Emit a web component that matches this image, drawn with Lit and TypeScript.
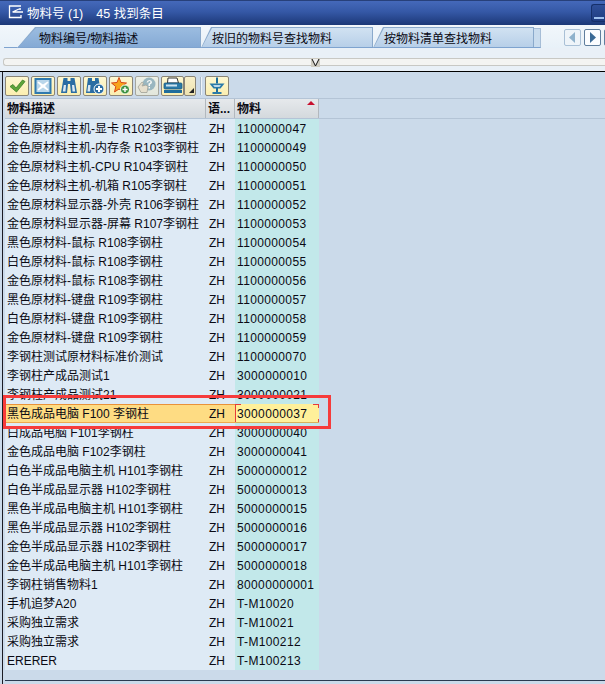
import { LitElement, html, css, svg } from "lit";
import { customElement } from "lit/decorators.js";

const rows: [string, string][] = [
  ["金色原材料主机-显卡 R102李钢柱", "1100000047"],
  ["金色原材料主机-内存条 R103李钢柱", "1100000049"],
  ["金色原材料主机-CPU R104李钢柱", "1100000050"],
  ["金色原材料主机-机箱 R105李钢柱", "1100000051"],
  ["金色原材料显示器-外壳 R106李钢柱", "1100000052"],
  ["金色原材料显示器-屏幕 R107李钢柱", "1100000053"],
  ["黑色原材料-鼠标 R108李钢柱", "1100000054"],
  ["白色原材料-鼠标 R108李钢柱", "1100000055"],
  ["金色原材料-鼠标 R108李钢柱", "1100000056"],
  ["黑色原材料-键盘 R109李钢柱", "1100000057"],
  ["白色原材料-键盘 R109李钢柱", "1100000058"],
  ["金色原材料-键盘 R109李钢柱", "1100000059"],
  ["李钢柱测试原材料标准价测试", "1100000070"],
  ["李钢柱产成品测试1", "3000000010"],
  ["李钢柱产成品测试21", "3000000021"],
  ["黑色成品电脑 F100 李钢柱", "3000000037"],
  ["白成品电脑 F101李钢柱", "3000000040"],
  ["金色成品电脑 F102李钢柱", "3000000041"],
  ["白色半成品电脑主机 H101李钢柱", "5000000012"],
  ["白色半成品显示器 H102李钢柱", "5000000013"],
  ["黑色半成品电脑主机 H101李钢柱", "5000000015"],
  ["黑色半成品显示器 H102李钢柱", "5000000016"],
  ["金色半成品显示器 H102李钢柱", "5000000017"],
  ["金色半成品电脑主机 H101李钢柱", "5000000018"],
  ["李钢柱销售物料1", "80000000001"],
  ["手机追梦A20", "T-M10020"],
  ["采购独立需求", "T-M10021"],
  ["采购独立需求", "T-M100212"],
  ["ERERER", "T-M100213"],
];

const ico = (body: unknown) =>
  html`<svg width="20" height="18" viewBox="0 0 20 18">${body}</svg>`;

const check = svg`<path d="M3 9.5 L6 7.5 L9 11 L15.5 3 L18 4.5 L9.5 15 Z" fill="#5da53a" stroke="#3e7f2b" stroke-width=".8"/>`;
const cancel = svg`<rect x="1.5" y="1" width="17" height="16" fill="#2f79ae"/><rect x="3.5" y="3" width="13" height="12" fill="#b9d6ea"/><path d="M5.5 4.5 L10 7.5 L14.5 4.5 L15.5 5.5 L12 9 L15.5 12.5 L14.5 13.5 L10 10.5 L5.5 13.5 L4.5 12.5 L8 9 L4.5 5.5 Z" fill="#fff"/>`;
const bino = svg`<path d="M4.5 1 H8.5 V4 H11.5 V1 H15.5 L18 16 H12 L11 7 H9 L8 16 H2 Z" fill="#2a6da3"/><path d="M4.8 8 H7 L6.5 14.5 H3.8 Z M13 8 H15.2 L16.2 14.5 H13.5 Z" fill="#dce9f3"/>`;
const binoPlus = svg`<path d="M3 1 H7 V4 H10 V1 H13.5 L14.5 7 L10 9 V16 H1 Z" fill="#2a6da3"/><path d="M3.2 8 H5.5 L5 14.5 H2.4 Z" fill="#dce9f3"/><circle cx="14" cy="12" r="5" fill="#2a6da3" stroke="#f5f9fb" stroke-width="1"/><path d="M11 11 h2 v-2 h2 v2 h2 v2 h-2 v2 h-2 v-2 h-2 z" fill="#fff"/>`;
const starPlus = svg`<path d="M8 0.5 L10 5.5 L15.5 6 L11.2 9.5 L12.5 15 L8 12 L3.5 15 L4.8 9.5 L0.5 6 L6 5.5 Z" fill="#f7a51c" stroke="#d6461b" stroke-width="1"/><circle cx="14" cy="12.5" r="4.5" fill="#3c9140" stroke="#fdfdf0" stroke-width="1"/><path d="M11.5 11.8 h1.8 v-1.8 h1.4 v1.8 h1.8 v1.4 h-1.8 v1.8 h-1.4 v-1.8 h-1.8 z" fill="#fff"/>`;
const help = svg`<g opacity=".75"><circle cx="12" cy="7" r="6.5" fill="#7fa5b5"/><path d="M9.5 5.5 q0.5-2.5 3-2.5 q2.5.2 2.5 2.2 q0 1.5-2 2.3 v1.5 h-1.5 v-2.5 q2-.5 2-1.5 q-.2-1-1-1 q-1 0-1.3 1.2 z M11.5 10 h1.5 v1.5 h-1.5 z" fill="#fff"/><path d="M1 10 l4-5 l1.5 1 l-1.5 3 l4 -1 l2 1.5 l-1 6 h-6 z" fill="#e6dcc8" stroke="#8a8a80" stroke-width=".8"/></g>`;
const printer = svg`<path d="M5 1 h9 l1.5 5 h-11 z" fill="#fff" stroke="#333" stroke-width="1"/><rect x="1" y="6" width="18" height="6" rx="1" fill="#2a7aa8" stroke="#1d5a80" stroke-width=".8"/><rect x="3" y="7.5" width="11" height="2" fill="#cde3f0"/><rect x="1" y="13" width="18" height="3" fill="#1f6d9c"/>`;
const pin = svg`<path d="M9 0.5 h2 v6 h-2 z" fill="#1f6d9c"/><path d="M2.5 6.5 h15 l-4 5 h-7 z" fill="#2a7aa8"/><path d="M6 8 h8 l-1.5 2 h-5 z" fill="#bcd9ea"/><path d="M9 11 h2 v4 h-2 z" fill="#1f6d9c"/><path d="M5.5 15 h9 v2 h-9 z" fill="#2a7aa8"/>`;

@customElement("app-root")
export class AppRoot extends LitElement {
  static styles = css`
    :host {
      display: block;
      width: 605px;
      height: 684px;
      overflow: hidden;
      position: relative;
      font: 12px "Liberation Sans", "Noto Sans CJK SC", sans-serif;
      color: #0a0a14;
      background: #cbdaea;
    }
    .title {
      height: 25px;
      box-sizing: border-box;
      border-top: 1px solid #27407a;
      background: linear-gradient(#4569ba, #3558a6 45%, #1c3877);
      color: #fff;
      display: flex;
      align-items: center;
      padding: 0 0 2px 8px;
      font-size: 12.5px;
    }
    .title svg { margin-right: 3px; flex: none; }
    .title .t2 { margin-left: 13px; }
    .title .fill { flex: 1; }
    .min {
      flex: none;
      width: 14px;
      height: 14px;
      margin-right: -1px;
      border: 1px solid #16306a;
      border-right: none;
      border-radius: 3px 0 0 3px;
      background: linear-gradient(#2f4f99, #1f3c80);
      display: flex;
      align-items: flex-end;
      justify-content: center;
      padding-bottom: 2px;
      margin-top: 2px;
    }
    .min i { display: block; width: 10px; height: 2px; background: #9fc0ee; }
    .tabbar {
      height: 23px;
      box-sizing: border-box;
      background: linear-gradient(#f2f7fb, #e8f1f8);
      display: flex;
      align-items: flex-end;
      padding-left: 4px;
      position: relative;
    }
    .tabline {
      flex: none;
      width: 13px;
      height: 1px;
      background: #7ea3cf;
    }
    .tab {
      flex: none;
      height: 21px;
      padding: 1px 0 0 22px;
      box-sizing: border-box;
      display: flex;
      align-items: center;
      clip-path: polygon(18px 0, 100% 0, 100% 100%, 0 100%);
      background: #8aa9cb;
      position: relative;
      white-space: nowrap;
      border-bottom: 1px solid #7ea3cf;
    }
    .tab::before {
      content: "";
      position: absolute;
      inset: 1px 1px 0 1px;
      clip-path: polygon(18px 0, 100% 0, 100% 100%, 0 100%);
      background: linear-gradient(#d1e2f2, #b7cfe8);
    }
    .tab span { position: relative; }
    .tab.on::before { background: linear-gradient(#9bbce0, #85aad5); }
    .tab.on { width: 184px; }
    .tab.t2 { width: 172px; padding-left: 11px; clip-path: polygon(10px 0, 100% 0, 100% 100%, 0 100%); }
    .tab.t2::before { clip-path: polygon(10px 0, 100% 0, 100% 100%, 0 100%); }
    .tab.t3 { width: 161px; padding-left: 11px; clip-path: polygon(10px 0, 100% 0, 100% 100%, 0 100%); }
    .tab.t3::before { clip-path: polygon(10px 0, 100% 0, 100% 100%, 0 100%); }
    .stack {
      flex: none;
      width: 7px;
      height: 20px;
      box-sizing: border-box;
      border: 1px solid #a6bdd6;
      border-left: none;
      border-bottom: 1px solid #7ea3cf;
      background: #c9dcee;
    }
    .nav {
      display: flex;
      gap: 3px;
      margin-left: 23px;
      align-self: flex-start;
      margin-top: 4px;
    }
    .nav b {
      flex: none;
      width: 17px;
      height: 17px;
      box-sizing: border-box;
      border: 1px solid #a9c0d6;
      border-radius: 2px;
      background: #eef4f9;
      display: flex;
      align-items: center;
      justify-content: center;
    }
    .nav b.act { border-color: #5f7e9d; background: #fbfdff; }
    .split {
      height: 24px;
      box-sizing: border-box;
      background: #e9f0f7;
      padding: 10px 0 0 3px;
      border-bottom: 1px solid #000;
      position: relative;
    }
    .split div {
      height: 8px;
      box-sizing: border-box;
      border-top: 1px solid #c8c8c4;
      border-bottom: 1px solid #c8c8c4;
      border-left: 1px solid #c8c8c4;
      border-radius: 3px 0 0 3px;
      background: #f4f4f2;
    }
    .grip {
      position: absolute;
      left: 311px;
      top: 10px;
      width: 9px;
      height: 9px;
      background: #cfccc2;
    }
    .grip svg { display: block; }
    .body {
      margin-left: 2px;
      padding-left: 2px;
      height: 612px;
      box-sizing: border-box;
      border-left: 1px solid #1b1b24;
      position: relative;
    }
    .frame {
      height: 609px;
      box-sizing: border-box;
      border-bottom: 1px solid #2a3a50;
    }
    .toolbar {
      height: 27px;
      box-sizing: border-box;
      display: flex;
      align-items: flex-start;
      padding-top: 4px;
      border-bottom: 1px solid #b4c4d6;
    }
    .btn {
      width: 24px;
      height: 20px;
      box-sizing: border-box;
      flex: none;
      border: 1px solid #8a8578;
      border-radius: 2px;
      background: linear-gradient(#fdf7d2, #fbeeb0);
      margin-right: 2px;
      display: flex;
      align-items: center;
      justify-content: center;
    }
    .btn.fade { background: linear-gradient(#eef0e6, #e2e6dc); border-color: #a5a69e; }
    .btn.print { width: 23px; margin-right: 0; }
    .btn.drop { width: 12px; margin-right: 0; background: linear-gradient(#f7efca, #eee3b0); position: relative; }
    .btn.drop::after {
      content: "";
      position: absolute;
      right: 1px;
      bottom: 2px;
      border-left: 5px solid transparent;
      border-bottom: 5px solid #222;
    }
    .sep { width: 2px; height: 18px; background: #eef3f8; border-left: 1px solid #a8b8c8; box-sizing: border-box; margin: 1px 3px 0 4px; }
    .header {
      display: grid;
      grid-template-columns: 201px 29px 84px;
      height: 20px;
      box-sizing: border-box;
      border-bottom: 1px solid #b4c4d6;
      width: 601px;
      font-weight: 700;
    }
    .header > div {
      background: linear-gradient(#e6e9ec, #d4d9dd);
      border-right: 1px solid #b2b8be;
      padding-left: 2px;
      line-height: 21px;
      overflow: hidden;
      white-space: nowrap;
      position: relative;
      box-sizing: border-box;
    }
    .header .sort {
      position: absolute;
      right: 3px;
      top: 2px;
      border-left: 4px solid transparent;
      border-right: 4px solid transparent;
      border-bottom: 4px solid #c8102e;
    }
    .tbl { width: 314px; }
    .row {
      display: grid;
      grid-template-columns: 201px 29px 84px;
      height: 19px;
      line-height: 21px;
      background: #deeaf5;
      white-space: nowrap;
    }
    .row > div { padding-left: 2px; overflow: hidden; height: 19px; }
    .row > div:nth-child(2) { padding-left: 3px; }
    .row > div:nth-child(3) { background: #c2e8ea; letter-spacing: 0.03em; padding-left: 2px; }
    .row.sel { background: #fedc83; box-shadow: inset 0 1px 0 #e9923a, inset 0 -1px 0 #f0a94c; }
    .row.sel > div:nth-child(3) {
      background:
        linear-gradient(#e83a3a, #e83a3a) left top / 6px 1px no-repeat,
        linear-gradient(#e83a3a, #e83a3a) right top / 6px 1px no-repeat,
        linear-gradient(#e83a3a, #e83a3a) left bottom / 6px 1px no-repeat,
        linear-gradient(#e83a3a, #e83a3a) right bottom / 6px 1px no-repeat,
        linear-gradient(#e83a3a, #e83a3a) left top / 1px 100% no-repeat,
        linear-gradient(#e83a3a, #e83a3a) right top / 1px 4px no-repeat,
        linear-gradient(#e83a3a, #e83a3a) right bottom / 1px 4px no-repeat,
        #fff09a;
      box-shadow: inset 0 -1px 0 #d9b25a;
    }
    .mark {
      position: absolute;
      left: 3px;
      top: 395px;
      width: 328px;
      height: 34px;
      box-sizing: border-box;
      border: 3px solid #f63b3b;
      pointer-events: none;
    }
  `;

  render() {
    return html`
      <div class="title">
        <svg width="16" height="14" viewBox="0 0 16 14" fill="none" stroke="#fff" stroke-width="1.3">
          <path d="M13 1 H1.5 V12.5 H13 V10 M4.5 7 H15 M11 4 L4.5 7 M11 4 H13" />
        </svg>
        <span>物料号 (1)</span><span class="t2">45 找到条目</span>
        <span class="fill"></span>
        <span class="min"><i></i></span>
      </div>
      <div class="tabbar">
        <div class="tabline"></div>
        <div class="tab on"><span>物料编号/物料描述</span></div>
        <div class="tab t2"><span>按旧的物料号查找物料</span></div>
        <div class="tab t3"><span>按物料清单查找物料</span></div>
        <div class="stack"></div>
        <div class="nav">
          <b><svg width="7" height="11" viewBox="0 0 7 11"><path d="M6 0 V11 L0 5.5 Z" fill="#8fb2cc"/></svg></b>
          <b class="act"><svg width="7" height="11" viewBox="0 0 7 11"><path d="M1 0 V11 L7 5.5 Z" fill="#3a6a96"/></svg></b>
          <b class="act"></b>
        </div>
      </div>
      <div class="split">
        <div></div>
        <span class="grip"><svg width="9" height="9" viewBox="0 0 9 9"><path d="M1 1 L4.5 8 L8 1" fill="#eee" stroke="#111" stroke-width="1"/></svg></span>
      </div>
      <div class="body">
        <div class="frame">
          <div class="toolbar">
            <span class="btn">${ico(check)}</span>
            <span class="btn">${ico(cancel)}</span>
            <span class="btn">${ico(bino)}</span>
            <span class="btn">${ico(binoPlus)}</span>
            <span class="btn">${ico(starPlus)}</span>
            <span class="btn fade">${ico(help)}</span>
            <span class="btn print">${ico(printer)}</span>
            <span class="btn drop"></span>
            <span class="sep"></span>
            <span class="btn">${ico(pin)}</span>
          </div>
          <div class="header">
            <div>物料描述</div>
            <div>语...</div>
            <div>物料<span class="sort"></span></div>
          </div>
          <div class="tbl">
            ${rows.map(
              (r, i) => html`<div class="row ${i === 15 ? "sel" : ""}">
                <div>${r[0]}</div>
                <div>ZH</div>
                <div>${r[1]}</div>
              </div>`
            )}
          </div>
        </div>
      </div>
      <div class="mark"></div>
    `;
  }
}
